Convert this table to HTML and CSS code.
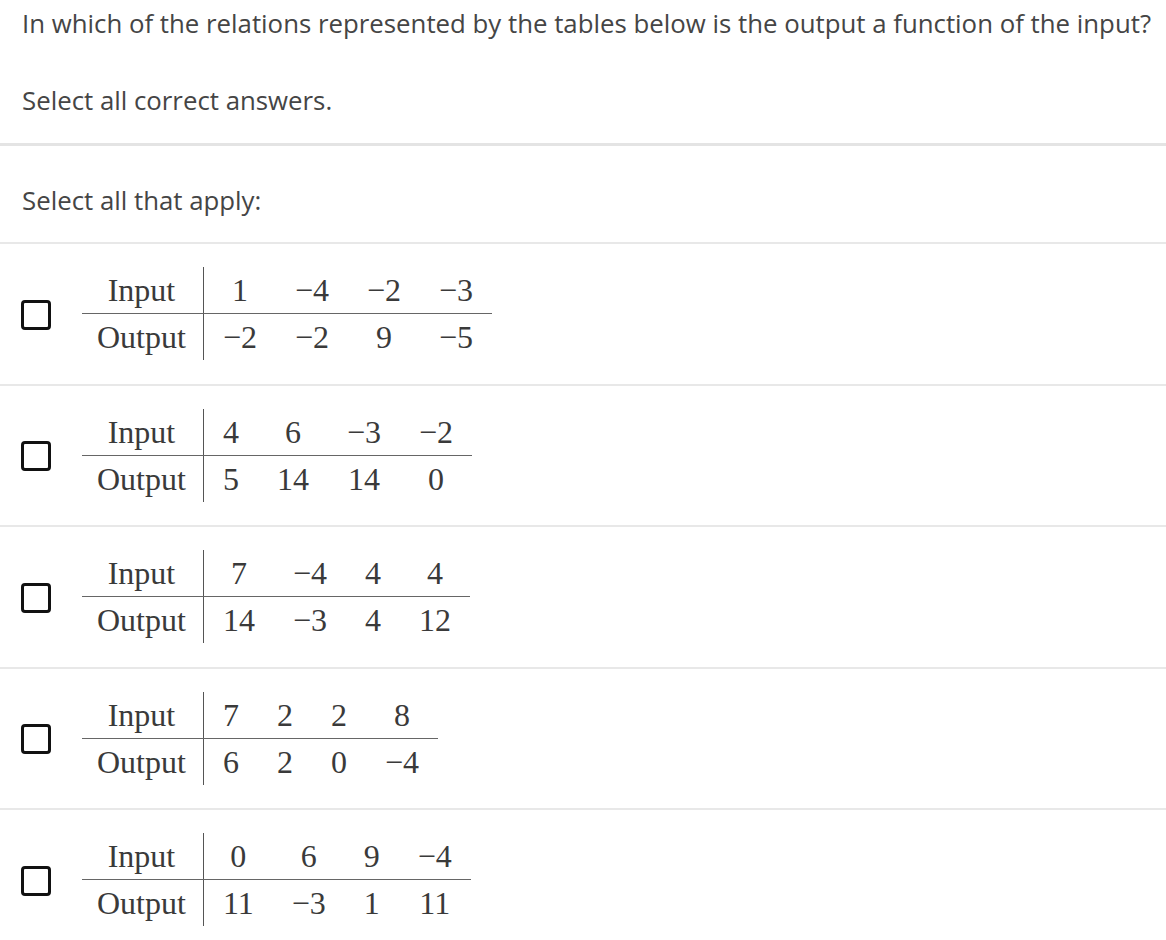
FILE: index.html
```html
<!DOCTYPE html>
<html lang="en">
<head>
<meta charset="utf-8">
<title>Functions</title>
<link rel="stylesheet" href="styles.css">
</head>
<body>
<div class="prompt">
  <p class="q title">In which of the relations represented by the tables below is the output a function of the input?</p>
  <p class="q second">Select all correct answers.</p>
</div>
<div class="apply">
  <p class="q">Select all that apply:</p>
</div>
<ul class="options">
  <li class="option">
    <span class="box"></span>
    <table class="rel">
      <tr class="in"><th>Input</th><td>1</td><td>−4</td><td>−2</td><td>−3</td></tr>
      <tr><th>Output</th><td>−2</td><td>−2</td><td>9</td><td>−5</td></tr>
    </table>
  </li>
  <li class="option">
    <span class="box"></span>
    <table class="rel">
      <tr class="in"><th>Input</th><td>4</td><td>6</td><td>−3</td><td>−2</td></tr>
      <tr><th>Output</th><td>5</td><td>14</td><td>14</td><td>0</td></tr>
    </table>
  </li>
  <li class="option">
    <span class="box"></span>
    <table class="rel">
      <tr class="in"><th>Input</th><td>7</td><td>−4</td><td>4</td><td>4</td></tr>
      <tr><th>Output</th><td>14</td><td>−3</td><td>4</td><td>12</td></tr>
    </table>
  </li>
  <li class="option">
    <span class="box"></span>
    <table class="rel">
      <tr class="in"><th>Input</th><td>7</td><td>2</td><td>2</td><td>8</td></tr>
      <tr><th>Output</th><td>6</td><td>2</td><td>0</td><td>−4</td></tr>
    </table>
  </li>
  <li class="option">
    <span class="box"></span>
    <table class="rel">
      <tr class="in"><th>Input</th><td>0</td><td>6</td><td>9</td><td>−4</td></tr>
      <tr><th>Output</th><td>11</td><td>−3</td><td>1</td><td>11</td></tr>
    </table>
  </li>
</ul>
</body>
</html>
```
FILE: styles.css
```css
html, body {
  margin: 0;
  padding: 0;
  background: #ffffff;
}
body {
  font-family: "Open Sans", "Noto Sans", sans-serif;
  color: #454545;
  width: 1166px;
  overflow: hidden;
}
.q {
  margin: 0;
  font-size: 25.8px;
  line-height: 34px;
}
.title {
  white-space: nowrap;
}
.prompt {
  padding: 6px 0 26px 22px;
  border-bottom: 3px solid #e4e4e4;
}
.second {
  margin-top: 43px;
}
.apply {
  padding: 37px 22px 25px;
  border-bottom: 2px solid #e8e8e8;
}
.options {
  list-style: none;
  margin: 0;
  padding: 0;
}
.option {
  display: flex;
  align-items: center;
  height: 139.5px;
  padding-left: 21px;
  border-bottom: 2px solid #e8e8e8;
}
.box {
  width: 30px;
  height: 30px;
  box-sizing: border-box;
  border: 3.5px solid #111;
  border-radius: 4px;
  margin-right: 31px;
  flex: none;
  position: relative;
  top: 1px;
}
.rel {
  border-collapse: collapse;
  font-family: "Liberation Serif", "Times New Roman", serif;
  font-size: 32px;
  color: #3a3a3a;
}
.rel th,
.rel td {
  font-weight: normal;
  text-align: center;
  line-height: 46px;
  height: 46px;
  padding: 0 19px;
  white-space: nowrap;
}
.rel th {
  padding: 0 17px 0 15px;
  border-right: 1.5px solid #555;
}
.rel tr.in th,
.rel tr.in td {
  border-bottom: 1.5px solid #666;
}
```
